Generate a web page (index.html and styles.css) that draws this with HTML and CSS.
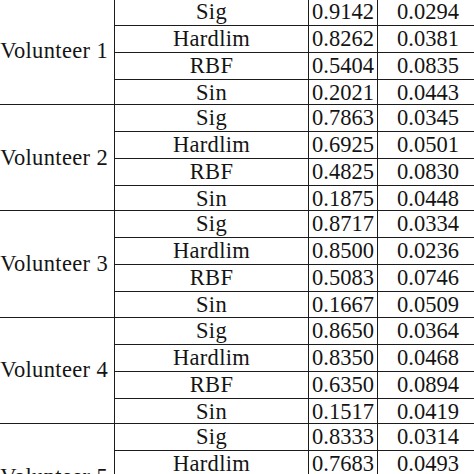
FILE: index.html
```html
<!DOCTYPE html>
<html>
<head>
<meta charset="utf-8">
<link rel="stylesheet" href="styles.css">
</head>
<body>
<div class="table">
  <div class="group">
    <div class="label">Volunteer 1</div>
    <div class="rows">
      <div class="row"><div class="m">Sig</div><div class="v">0.9142</div><div class="s">0.0294</div></div>
      <div class="row"><div class="m">Hardlim</div><div class="v">0.8262</div><div class="s">0.0381</div></div>
      <div class="row"><div class="m">RBF</div><div class="v">0.5404</div><div class="s">0.0835</div></div>
      <div class="row"><div class="m">Sin</div><div class="v">0.2021</div><div class="s">0.0443</div></div>
    </div>
  </div>
  <div class="group">
    <div class="label">Volunteer 2</div>
    <div class="rows">
      <div class="row"><div class="m">Sig</div><div class="v">0.7863</div><div class="s">0.0345</div></div>
      <div class="row"><div class="m">Hardlim</div><div class="v">0.6925</div><div class="s">0.0501</div></div>
      <div class="row"><div class="m">RBF</div><div class="v">0.4825</div><div class="s">0.0830</div></div>
      <div class="row"><div class="m">Sin</div><div class="v">0.1875</div><div class="s">0.0448</div></div>
    </div>
  </div>
  <div class="group">
    <div class="label">Volunteer 3</div>
    <div class="rows">
      <div class="row"><div class="m">Sig</div><div class="v">0.8717</div><div class="s">0.0334</div></div>
      <div class="row"><div class="m">Hardlim</div><div class="v">0.8500</div><div class="s">0.0236</div></div>
      <div class="row"><div class="m">RBF</div><div class="v">0.5083</div><div class="s">0.0746</div></div>
      <div class="row"><div class="m">Sin</div><div class="v">0.1667</div><div class="s">0.0509</div></div>
    </div>
  </div>
  <div class="group">
    <div class="label">Volunteer 4</div>
    <div class="rows">
      <div class="row"><div class="m">Sig</div><div class="v">0.8650</div><div class="s">0.0364</div></div>
      <div class="row"><div class="m">Hardlim</div><div class="v">0.8350</div><div class="s">0.0468</div></div>
      <div class="row"><div class="m">RBF</div><div class="v">0.6350</div><div class="s">0.0894</div></div>
      <div class="row"><div class="m">Sin</div><div class="v">0.1517</div><div class="s">0.0419</div></div>
    </div>
  </div>
  <div class="group">
    <div class="label">Volunteer 5</div>
    <div class="rows">
      <div class="row"><div class="m">Sig</div><div class="v">0.8333</div><div class="s">0.0314</div></div>
      <div class="row"><div class="m">Hardlim</div><div class="v">0.7683</div><div class="s">0.0493</div></div>
      <div class="row"><div class="m">RBF</div><div class="v">&nbsp;</div><div class="s">&nbsp;</div></div>
      <div class="row"><div class="m">Sin</div><div class="v">&nbsp;</div><div class="s">&nbsp;</div></div>
    </div>
  </div>
</div>
</body>
</html>
```
FILE: styles.css
```css
html, body {
  margin: 0;
  padding: 0;
  background: #fff;
  overflow: hidden;
  width: 474px;
  height: 474px;
}
.table {
  width: 478px;
  margin-top: -1.3px;
  font-family: "Liberation Serif", "Times New Roman", "DejaVu Serif", serif;
  font-size: 22.5px;
  color: #141414;
  display: flex;
  flex-direction: column;
}
.group {
  display: flex;
  height: 106.3px;
  box-sizing: border-box;
  border-bottom: 1px solid #1c1c1c;
  flex: none;
}
.label {
  width: 115px;
  box-sizing: border-box;
  border-right: 1px solid #1c1c1c;
  display: flex;
  align-items: center;
  justify-content: flex-end;
  padding-right: 6px;
  white-space: nowrap;
  letter-spacing: 0.35px;
}
.rows {
  flex: 1;
  display: flex;
  flex-direction: column;
}
.row {
  flex: 1;
  display: flex;
  align-items: center;
  border-bottom: 1px solid #1c1c1c;
}
.row:last-child {
  border-bottom: none;
}
.m, .v, .s {
  box-sizing: border-box;
  height: 100%;
  display: flex;
  align-items: center;
  justify-content: center;
}
.m {
  width: 194px;
  border-right: 1px solid #1c1c1c;
  letter-spacing: 0.3px;
}
.v {
  width: 69px;
  border-right: 1px solid #1c1c1c;
}
.s {
  flex: 1;
}
```
